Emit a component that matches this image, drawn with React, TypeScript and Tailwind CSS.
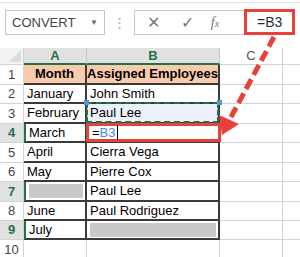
import React from 'react';

const rows = [
  { n: 1, a: 'Month', b: 'Assigned Employees', h: 'h-[20px]' },
  { n: 2, a: 'January', b: 'John Smith', h: 'h-[19px]' },
  { n: 3, a: 'February', b: 'Paul Lee', h: 'h-[20px]' },
  { n: 4, a: 'March', b: '', h: 'h-[19px]' },
  { n: 5, a: 'April', b: 'Cierra Vega', h: 'h-[20px]' },
  { n: 6, a: 'May', b: 'Pierre Cox', h: 'h-[19px]' },
  { n: 7, a: '', b: 'Paul Lee', h: 'h-[20px]' },
  { n: 8, a: 'June', b: 'Paul Rodriguez', h: 'h-[19px]' },
  { n: 9, a: 'July', b: '', h: 'h-[19px]' },
];

const selectedRows = [4, 7, 9];

const RowHead = ({ n }: { n: number }) => {
  const sel = selectedRows.includes(n);
  return (
    <div
      className={`w-[24px] shrink-0 flex items-center justify-center border-r border-b border-[#d4d4d4] text-[13px] ${
        sel ? 'bg-[#e1e1e1] text-[#217346] font-bold' : 'text-[#444]'
      }`}
    >
      {n}
    </div>
  );
};

const App = () => {
  return (
    <div className="relative w-[300px] h-[257px] overflow-hidden bg-white font-['Liberation_Sans',sans-serif] text-black">
      {/* formula bar */}
      <div className="h-[48px] pt-[2px]">
        <div className="border-t border-[#e3e3e3] pt-[7px] flex items-start">
          <div className="ml-[5px] w-[100px] h-[25px] border border-[#c6c6c6] flex items-center pl-[6px] pr-[6px] text-[13px] text-[#444]">
            <span className="flex-1">CONVERT</span>
            <span className="text-[8px] text-[#666]">▼</span>
          </div>
          <div className="w-[29px] h-[25px] flex items-center justify-center text-[13px] text-[#aaa]">⋮</div>
          <div className="w-[110px] h-[25px] border-t border-b border-l border-[#c6c6c6] flex items-center text-[#777]">
            <span className="w-[36px] text-center text-[16px]">✕</span>
            <span className="w-[32px] text-center text-[16px]">✓</span>
            <span className="w-[24px] text-center text-[14px] italic font-['Liberation_Serif',serif]">
              f<span className="text-[10px]">x</span>
            </span>
          </div>
          <div className="w-[51px] h-[26px] -mt-[1px] border-[3px] border-[#e8413c] flex items-center pl-[10px] text-[14px] text-[#1f2d3d]">
            =B3
          </div>
        </div>
      </div>

      {/* column headers */}
      <div className="flex h-[17px] bg-[#f3f3f3] text-[13px]">
        <div className="w-[24px] shrink-0 relative border-r border-b border-[#d4d4d4]">
          <div className="absolute right-[2px] bottom-[2px] w-0 h-0 border-l-[12px] border-l-transparent border-b-[12px] border-b-[#dcdcdc]" />
        </div>
        <div className="w-[63px] shrink-0 bg-[#e1e1e1] border-r border-[#c6c6c6] border-b-2 border-b-[#217346] flex items-center justify-center text-[#217346] font-bold">
          A
        </div>
        <div className="w-[133px] shrink-0 bg-[#e1e1e1] border-r border-[#c6c6c6] border-b-2 border-b-[#217346] flex items-center justify-center text-[#217346] font-bold">
          B
        </div>
        <div className="w-[63px] shrink-0 bg-white border-r border-b border-[#d4d4d4] flex items-center justify-center text-[#555]">
          C
        </div>
        <div className="flex-1 bg-white border-b border-[#d4d4d4]" />
      </div>

      {/* rows */}
      {rows.map((r) => {
        const head = r.n === 1;
        const greenLeft = selectedRows.includes(r.n);
        return (
          <div key={r.n} className={`flex ${r.h} text-[13px]`}>
            <RowHead n={r.n} />
            <div
              className={`w-[63px] shrink-0 border-b-2 border-r-2 border-b-[#3a3a3a] border-r-[#3a3a3a] flex items-center ${
                head ? 'bg-[#f8cbad] font-bold justify-center' : 'pl-[3px]'
              } ${greenLeft ? 'border-l-2 border-l-[#217346] pl-[2px]' : ''}`}
            >
              {r.n === 7 ? <div className="w-full h-[14px] mr-[2px] bg-[#c9c9c9]" /> : r.a}
            </div>
            <div
              className={`relative w-[133px] shrink-0 border-b-2 border-r-2 border-b-[#3a3a3a] border-r-[#3a3a3a] flex items-center ${
                head ? 'bg-[#f8cbad] font-bold justify-center' : 'pl-[3px]'
              } ${r.n === 3 ? 'bg-[#eaf1fb]' : ''}`}
            >
              {r.n === 9 ? <div className="w-full h-[14px] mr-[2px] bg-[#c9c9c9]" /> : r.b}
              {r.n === 3 && (
                <>
                  <div className="absolute -left-[1px] -top-[2px] -right-[1px] -bottom-[1px] border-2 border-dashed border-[#217346]" />
                  <div className="absolute -left-[3px] -top-[4px] w-[5px] h-[5px] bg-[#5b8fd9]" />
                  <div className="absolute -right-[4px] -top-[4px] w-[5px] h-[5px] bg-[#5b8fd9]" />
                </>
              )}
              {r.n === 4 && (
                <div className="absolute -left-[1px] -top-[1px] -right-[3px] -bottom-[1px] border-[3px] border-[#e8413c] flex items-center pl-[3px]">
                  <span>=</span>
                  <span className="text-[#4a86e8]">B3</span>
                  <span className="ml-[1px] w-[1px] h-[15px] bg-black" />
                </div>
              )}
            </div>
            <div className="w-[63px] shrink-0 border-r border-b border-[#d4d4d4]" />
            <div className="flex-1 border-b border-[#d4d4d4]" />
          </div>
        );
      })}
      <div className="flex h-[20px] text-[13px]">
        <RowHead n={10} />
        <div className="w-[63px] shrink-0 border-r border-b border-[#d4d4d4]" />
        <div className="w-[133px] shrink-0 border-r border-b border-[#d4d4d4]" />
        <div className="w-[63px] shrink-0 border-r border-b border-[#d4d4d4]" />
        <div className="flex-1 border-b border-[#d4d4d4]" />
      </div>

      {/* annotation arrow */}
      <svg className="absolute left-0 top-0 pointer-events-none" width="300" height="257" viewBox="0 0 300 257">
        <line x1="274" y1="37" x2="231" y2="117" stroke="#e8413c" strokeWidth="5" strokeDasharray="11 5" />
        <polygon points="222,135 219,115 239,124" fill="#e8413c" />
      </svg>
    </div>
  );
};

export default App;
